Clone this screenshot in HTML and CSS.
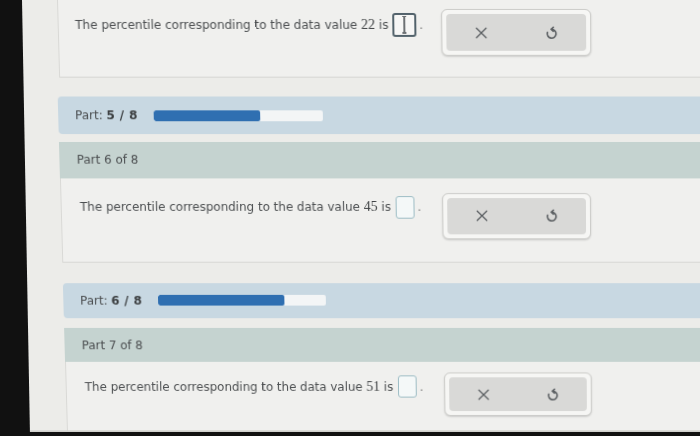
FILE: index.html
```html
<!DOCTYPE html>
<html lang="en">
<head>
<meta charset="utf-8">
<title>Percentile parts</title>
<link rel="stylesheet" href="styles.css">
</head>
<body>
<div class="stage">
  <main class="page">
    <section class="card card-first">
      <div class="qrow">
        <p class="q">The percentile corresponding to the data value <span class="num">22</span> is <span class="box box-active"><span class="ibeam"></span></span><span class="dot">.</span></p>
        <div class="btns">
          <div class="btns-inner">
            <span class="btn btn-x"><svg width="12" height="12" viewBox="0 0 12 12"><path d="M1.2 1.2 L10.8 10.8 M10.8 1.2 L1.2 10.8" stroke="#5a5e61" stroke-width="1.3" fill="none" stroke-linecap="round"/></svg></span>
            <span class="btn btn-undo"><svg width="13" height="14" viewBox="0 0 13 14"><path d="M6.3 3.4 A4.4 4.4 0 1 1 2.3 6.4" stroke="#5a5e61" stroke-width="1.6" fill="none" stroke-linecap="round"/><path d="M8.2 1.3 L6.1 3.4 L8.2 5.3" stroke="#5a5e61" stroke-width="1.6" fill="none" stroke-linecap="round" stroke-linejoin="round"/></svg></span>
          </div>
        </div>
      </div>
    </section>

    <div class="progress progress-a">
      <span class="plabel">Part: <b>5 / 8</b></span>
      <div class="bar"><div class="fill" style="width:62.5%"></div></div>
    </div>

    <section class="part part-a">
      <div class="part-head">Part 6 of 8</div>
      <div class="card card-body">
        <div class="qrow">
          <p class="q">The percentile corresponding to the data value <span class="num">45</span> is <span class="box"></span><span class="dot">.</span></p>
          <div class="btns">
            <div class="btns-inner">
              <span class="btn btn-x"><svg width="12" height="12" viewBox="0 0 12 12"><path d="M1.2 1.2 L10.8 10.8 M10.8 1.2 L1.2 10.8" stroke="#5a5e61" stroke-width="1.3" fill="none" stroke-linecap="round"/></svg></span>
              <span class="btn btn-undo"><svg width="13" height="14" viewBox="0 0 13 14"><path d="M6.3 3.4 A4.4 4.4 0 1 1 2.3 6.4" stroke="#5a5e61" stroke-width="1.6" fill="none" stroke-linecap="round"/><path d="M8.2 1.3 L6.1 3.4 L8.2 5.3" stroke="#5a5e61" stroke-width="1.6" fill="none" stroke-linecap="round" stroke-linejoin="round"/></svg></span>
            </div>
          </div>
        </div>
      </div>
    </section>

    <div class="progress progress-b">
      <span class="plabel">Part: <b>6 / 8</b></span>
      <div class="bar"><div class="fill" style="width:75%"></div></div>
    </div>

    <section class="part part-b">
      <div class="part-head">Part 7 of 8</div>
      <div class="card card-body card-last">
        <div class="qrow">
          <p class="q">The percentile corresponding to the data value <span class="num">51</span> is <span class="box"></span><span class="dot">.</span></p>
          <div class="btns">
            <div class="btns-inner">
              <span class="btn btn-x"><svg width="12" height="12" viewBox="0 0 12 12"><path d="M1.2 1.2 L10.8 10.8 M10.8 1.2 L1.2 10.8" stroke="#5a5e61" stroke-width="1.3" fill="none" stroke-linecap="round"/></svg></span>
              <span class="btn btn-undo"><svg width="13" height="14" viewBox="0 0 13 14"><path d="M6.3 3.4 A4.4 4.4 0 1 1 2.3 6.4" stroke="#5a5e61" stroke-width="1.6" fill="none" stroke-linecap="round"/><path d="M8.2 1.3 L6.1 3.4 L8.2 5.3" stroke="#5a5e61" stroke-width="1.6" fill="none" stroke-linecap="round" stroke-linejoin="round"/></svg></span>
            </div>
          </div>
        </div>
      </div>
    </section>
  </main>
</div>
<div class="bezel"></div>
</body>
</html>
```

FILE: styles.css
```css
html, body {
  margin: 0;
  padding: 0;
  background: #111111;
  overflow: hidden;
  width: 700px;
  height: 436px;
}

body {
  position: relative;
}

.stage {
  width: 800px;
  transform-origin: 690px 0;
  transform: perspective(1000px) rotateX(-2.5deg);
}

.page {
  height: 440.7px;
  background: #ecece9;
  padding-left: 54.5px;
  box-sizing: border-box;
  overflow: hidden;
  border-bottom: 2px solid #d0d0cc;
  font-family: "DejaVu Sans", "Liberation Sans", sans-serif;
  font-size: 12px;
  color: #4c4f51;
}

.bezel {
  position: absolute;
  left: 0;
  top: 0;
  width: 40px;
  height: 436px;
  background: #111111;
  clip-path: polygon(0 0, 22px 0, 30px 436px, 0 436px);
}

.card {
  background: #f0f0ee;
  border-left: 1px solid #d9d9d6;
  border-bottom: 1px solid #d6d6d3;
  box-sizing: border-box;
}

.card-first {
  margin-top: -6px;
  margin-left: 2.5px;
  height: 84.3px;
  padding: 15px 0 0 16.5px;
}

.card-body {
  height: 86.7px;
  padding: 15.2px 0 0 19px;
}

.card-last {
  height: 70.5px;
  padding-top: 11.3px;
  border-bottom: none;
}

.qrow {
  display: flex;
  align-items: flex-start;
}

.q {
  margin: 3px 0 0 0;
  height: 25px;
  display: flex;
  align-items: center;
  white-space: pre;
}

.card-body .q {
  margin-top: 2px;
}

.num {
  font-family: "Liberation Serif", "Times New Roman", serif;
  font-size: 14px;
  color: #3d4042;
}

.box {
  display: inline-block;
  width: 17px;
  height: 21px;
  border: 1.5px solid #9cbcc4;
  border-radius: 3px;
  background: #f4f8f8;
  margin-left: 1px;
  position: relative;
}

.box-active {
  width: 20px;
  height: 20px;
  border: 2px solid #52626b;
  background: #f6f6f5;
  margin-left: 0;
}

.ibeam {
  position: absolute;
  left: 9.3px;
  top: 1px;
  bottom: 1px;
  width: 1.4px;
  background: #6d7174;
}

.ibeam::before,
.ibeam::after {
  content: "";
  position: absolute;
  left: -1.5px;
  width: 4.4px;
  height: 1.3px;
  background: #6d7174;
}

.ibeam::before {
  top: 0;
}

.ibeam::after {
  bottom: 0;
}

.dot {
  margin-left: 3px;
  color: #777;
}

.btns {
  margin-left: 18px;
  width: 150.5px;
  height: 47px;
  box-sizing: border-box;
  border: 1px solid #cdcdca;
  border-radius: 6px;
  background: #f6f6f4;
  padding: 4px;
  box-shadow: 0 1px 2px rgba(0, 0, 0, 0.16);
}

.card-body .btns {
  margin-left: 21px;
}

.card-last .btns {
  height: 45px;
  margin-left: 21px;
}

.btns-inner {
  display: flex;
  height: 100%;
  background: #d9d9d7;
  border-radius: 4px;
}

.btn {
  flex: 1;
  display: flex;
  align-items: center;
  justify-content: center;
}

.progress {
  display: flex;
  align-items: center;
  background: #c8d8e2;
  border-radius: 4px 0 0 4px;
  padding-left: 17.5px;
  box-sizing: border-box;
}

.progress-a {
  margin-top: 19.2px;
  height: 37.4px;
}

.progress-b {
  margin-top: 20.5px;
  height: 36px;
}

.plabel b {
  color: #3b3e40;
  letter-spacing: 0.4px;
}

.bar {
  margin-left: 16px;
  width: 170.5px;
  height: 11px;
  background: #f3f5f6;
  border-radius: 2px;
  overflow: hidden;
}

.fill {
  height: 100%;
  background: #2f6fb1;
  border-radius: 2px;
}

.part-a {
  margin-top: 8.1px;
}

.part-b {
  margin-top: 10.3px;
}

.part-head {
  background: #c5d3d0;
  padding-left: 18px;
  display: flex;
  align-items: center;
}

.part-a .part-head {
  height: 36.6px;
}

.part-b .part-head {
  height: 35.1px;
}
```
